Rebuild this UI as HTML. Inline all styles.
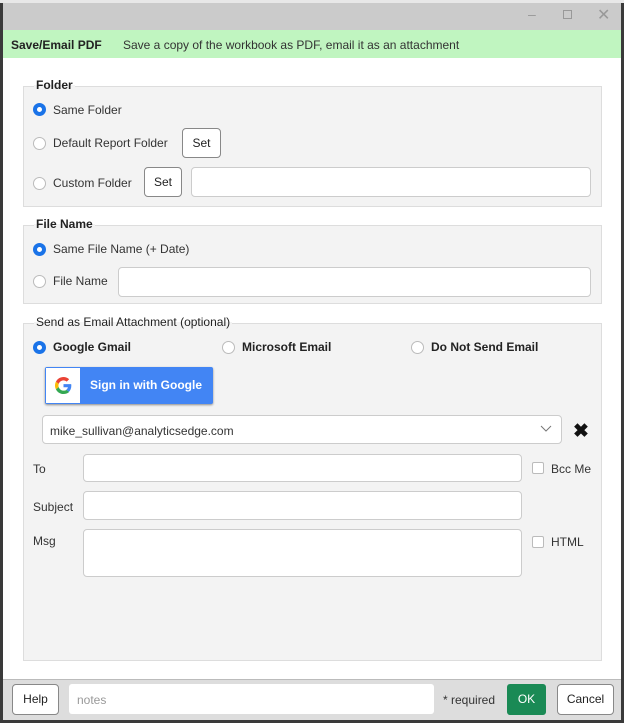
<!DOCTYPE html><html><head><style>
*{box-sizing:border-box}body{margin:0;width:624px;height:723px;background:#3a3a3a;font-family:"Liberation Sans",sans-serif;font-size:12px;color:#333;position:relative;overflow:hidden}
.a{position:absolute}
.fs{position:absolute;background:#f3f3f3;border:1px solid #ddd}
.lg{position:absolute;top:-9px;left:10px;background:linear-gradient(#fff 50%,#f3f3f3 50%);padding:0 2px;font-weight:bold;color:#222}
.in{position:absolute;background:#fff;border:1px solid #ccc;border-radius:4px}
.btn{position:absolute;background:#fff;border:1px solid #888;border-radius:4px;text-align:center;color:#222}
.r{position:absolute;width:13px;height:13px;border-radius:50%;border:1px solid #bbb;background:#fff}
.r.on{border:4px solid #1a73e8}
.t{position:absolute;white-space:nowrap}
</style></head><body>
<div class="a" style="left:0;top:0;width:624px;height:3px;background:#e8e8e8"></div>
<div class="a" style="left:3px;top:3px;width:618px;height:717px;background:#fff"></div>
<div class="a" style="left:3px;top:3px;width:618px;height:27px;background:#cbcbcb"></div>
<div class="t" style="left:528px;top:6px;color:#999;font-size:14px">–</div>
<div class="a" style="left:563px;top:10px;width:9px;height:9px;border:1px solid #999"></div>
<div class="t" style="left:597px;top:5px;color:#999;font-size:16px">✕</div>
<div class="a" style="left:3px;top:30px;width:618px;height:28px;background:#c0f5c0"></div>
<div class="t" style="left:11px;top:38px;font-weight:bold;color:#222">Save/Email PDF</div>
<div class="t" style="left:123px;top:38px;color:#333">Save a copy of the workbook as PDF, email it as an attachment</div>

<div class="fs" style="left:23px;top:86px;width:579px;height:121px"><div class="lg">Folder</div></div>
<div class="r on" style="left:33px;top:103px"></div><div class="t" style="left:53px;top:103px">Same Folder</div>
<div class="r" style="left:33px;top:137px"></div><div class="t" style="left:53px;top:136px">Default Report Folder</div>
<div class="btn" style="left:182px;top:128px;width:39px;height:30px;line-height:28px">Set</div>
<div class="r" style="left:33px;top:177px"></div><div class="t" style="left:53px;top:176px">Custom Folder</div>
<div class="btn" style="left:144px;top:167px;width:38px;height:30px;line-height:28px">Set</div>
<div class="in" style="left:191px;top:167px;width:400px;height:30px"></div>

<div class="fs" style="left:23px;top:225px;width:579px;height:79px"><div class="lg">File Name</div></div>
<div class="r on" style="left:33px;top:243px"></div><div class="t" style="left:53px;top:242px">Same File Name (+ Date)</div>
<div class="r" style="left:33px;top:275px"></div><div class="t" style="left:53px;top:274px">File Name</div>
<div class="in" style="left:118px;top:267px;width:473px;height:30px"></div>

<div class="fs" style="left:23px;top:323px;width:579px;height:338px"><div class="lg" style="font-weight:normal">Send as Email Attachment (optional)</div></div>
<div class="r on" style="left:33px;top:341px"></div><div class="t" style="left:53px;top:340px;font-weight:bold;color:#222">Google Gmail</div>
<div class="r" style="left:222px;top:341px"></div><div class="t" style="left:242px;top:340px;font-weight:bold;color:#222">Microsoft Email</div>
<div class="r" style="left:411px;top:341px"></div><div class="t" style="left:431px;top:340px;font-weight:bold;color:#222">Do Not Send Email</div>
<div class="a" style="left:45px;top:367px;width:168px;height:37px;background:#4285f4;border-radius:2px;box-shadow:0 1px 2px #888"></div>
<div class="a" style="left:46px;top:368px;width:34px;height:35px;background:#fff"></div>
<svg class="a" style="left:55px;top:377px" width="17" height="17" viewBox="0 0 48 48"><path fill="#EA4335" d="M24 9.5c3.5 0 6.6 1.2 9.1 3.6l6.8-6.8C35.8 2.4 30.3 0 24 0 14.6 0 6.6 5.4 2.6 13.3l7.9 6.2C12.4 13.7 17.7 9.5 24 9.5z"/><path fill="#4285F4" d="M46.1 24.5c0-1.6-.1-3.1-.4-4.5H24v9h12.4c-.5 2.9-2.200 5.4-4.7 7l7.6 5.9c4.4-4.1 6.8-10.1 6.8-17.4z"/><path fill="#FBBC05" d="M10.5 28.6c-.5-1.4-.8-3-.8-4.6s.3-3.2.8-4.6l-7.9-6.2C.9 16.6 0 20.2 0 24s.9 7.4 2.6 10.8l7.9-6.2z"/><path fill="#34A853" d="M24 48c6.5 0 11.900-2.1 15.9-5.8l-7.6-5.9c-2.1 1.4-4.9 2.3-8.3 2.3-6.3 0-11.6-4.2-13.5-10l-7.9 6.2C6.6 42.6 14.6 48 24 48z"/></svg>
<div class="t" style="left:90px;top:378px;color:#fff;font-weight:bold">Sign in with Google</div>
<div class="in" style="left:42px;top:415px;width:520px;height:29px"></div>
<div class="t" style="left:50px;top:424px">mike_sullivan@analyticsedge.com</div>
<svg class="a" style="left:540px;top:425px" width="12" height="8"><path d="M1 1l5 5 5-5" stroke="#777" fill="none"/></svg>
<div class="t" style="left:573px;top:420px;font-size:19px;font-weight:bold;color:#111">✖</div>
<div class="t" style="left:33px;top:462px">To</div><div class="in" style="left:83px;top:454px;width:439px;height:28px"></div>
<div class="a" style="left:532px;top:462px;width:12px;height:12px;border:1px solid #bbb;background:#fff;border-radius:2px"></div><div class="t" style="left:551px;top:462px">Bcc Me</div>
<div class="t" style="left:33px;top:500px">Subject</div><div class="in" style="left:83px;top:491px;width:439px;height:29px"></div>
<div class="t" style="left:33px;top:534px">Msg</div><div class="in" style="left:83px;top:529px;width:439px;height:48px"></div>
<div class="a" style="left:532px;top:536px;width:12px;height:12px;border:1px solid #bbb;background:#fff;border-radius:2px"></div><div class="t" style="left:551px;top:535px">HTML</div>

<div class="a" style="left:3px;top:679px;width:618px;height:41px;background:#ddd;border-top:1px solid #bbb"></div>
<div class="btn" style="left:12px;top:684px;width:47px;height:31px;line-height:29px">Help</div>
<div class="a" style="left:69px;top:684px;width:365px;height:30px;background:#fff;border-radius:3px"></div>
<div class="t" style="left:77px;top:693px;color:#999">notes</div>
<div class="t" style="left:443px;top:693px">* required</div>
<div class="a" style="left:507px;top:684px;width:39px;height:31px;background:#1a8a55;border-radius:3px;color:#fff;text-align:center;line-height:31px">OK</div>
<div class="btn" style="left:557px;top:684px;width:57px;height:31px;line-height:29px">Cancel</div>
</body></html>
